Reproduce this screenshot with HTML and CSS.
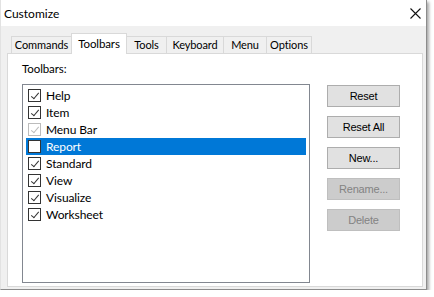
FILE: index.html
```html
<!DOCTYPE html>
<html>
<head>
<meta charset="utf-8">
<link rel="stylesheet" href="styles.css">
</head>
<body>
<div class="window">
  <div class="titlebar">
    <span class="title">Customize</span>
    <svg class="close" width="11" height="11" viewBox="0 0 11 11"><path d="M0.5 0.5 L10.5 10.5 M10.5 0.5 L0.5 10.5" stroke="#111" stroke-width="1.1" fill="none"/></svg>
  </div>
  <div class="body">
    <div class="tabs">
      <div class="tab first w-commands">Commands</div>
      <div class="tab active w-toolbars">Toolbars</div>
      <div class="tab w-tools">Tools</div>
      <div class="tab w-keyboard">Keyboard</div>
      <div class="tab w-menu">Menu</div>
      <div class="tab w-options">Options</div>
    </div>
    <div class="panel">
      <div class="left">
        <div class="label">Toolbars:</div>
        <div class="listbox">
          <div class="row"><span class="cb on"></span><span class="txt">Help</span></div>
          <div class="row"><span class="cb on"></span><span class="txt">Item</span></div>
          <div class="row"><span class="cb on dis"></span><span class="txt">Menu Bar</span></div>
          <div class="row sel"><span class="cb"></span><span class="txt">Report</span></div>
          <div class="row"><span class="cb on"></span><span class="txt">Standard</span></div>
          <div class="row"><span class="cb on"></span><span class="txt">View</span></div>
          <div class="row"><span class="cb on"></span><span class="txt">Visualize</span></div>
          <div class="row"><span class="cb on"></span><span class="txt">Worksheet</span></div>
        </div>
      </div>
      <div class="buttons">
        <div class="btn">Reset</div>
        <div class="btn">Reset All</div>
        <div class="btn">New...</div>
        <div class="btn disabled">Rename...</div>
        <div class="btn disabled">Delete</div>
      </div>
    </div>
  </div>
</div>
</body>
</html>
```

FILE: styles.css
```css
html, body { margin: 0; padding: 0; background: #fff; }
body { font-family: "Lato", "Liberation Sans", sans-serif; font-size: 11.5px; letter-spacing: -0.1px; color: #000; }

.window {
  width: 427px;
  height: 290px;
  box-sizing: border-box;
  border-left: 1px solid #e2e2e2;
  border-right: 1px solid #8c8c8c;
  border-bottom: 1px solid #8c8c8c;
  box-shadow: 2px 2px 3px rgba(0,0,0,0.35);
  display: flex;
  flex-direction: column;
  background: #f0f0f0;
}

.titlebar {
  height: 26px;
  background: #fff;
  display: flex;
  align-items: center;
  justify-content: space-between;
  padding: 0 5px 0 3px;
  flex: none;
}
.title { font-size: 12px; letter-spacing: 0; }
.close { display: block; }

.body {
  flex: 1;
  display: flex;
  flex-direction: column;
  padding: 7px 3px 3px 6px;
}

.tabs {
  display: flex;
  align-items: flex-end;
  padding-left: 4px;
  height: 20px;
  position: relative;
  z-index: 1;
}
.tab {
  height: 17px;
  box-sizing: border-box;
  border: 1px solid #d9d9d9;
  border-left: none;
  border-bottom: none;
  background: #f0f0f0;
  font-size: 11px;
  line-height: 16px;
  text-align: center;
  letter-spacing: -0.1px;
}
.tab.first { border-left: 1px solid #d9d9d9; }
.tab.active {
  height: 21px;
  background: #fff;
  border-left: 1px solid #d9d9d9;
  margin-left: -1px;
  padding-top: 1px;
  line-height: 17px;
  margin-bottom: -1px;
  font-size: 11.5px;
}
.w-commands { width: 61px; }
.w-toolbars { width: 56px; }
.w-tools { width: 40px; }
.w-keyboard { width: 57px; }
.w-menu { width: 43px; }
.w-options { width: 45px; }

.panel {
  flex: 1;
  background: #fff;
  border: 1px solid #d9d9d9;
  display: flex;
  padding: 8px 0 3px 14px;
}

.left { display: flex; flex-direction: column; }
.label { height: 22px; line-height: 14px; }

.listbox {
  width: 288px;
  height: 199px;
  box-sizing: border-box;
  border: 1px solid #828790;
  padding: 2px 3px 0 3px;
}
.row {
  height: 17px;
  display: flex;
  align-items: center;
  font-size: 12px;
}
.row.sel { background: #0078d7; color: #fff; }
.cb {
  width: 13px;
  height: 13px;
  box-sizing: border-box;
  border: 1px solid #333;
  background: #fff;
  margin-left: 2px;
  margin-right: 5px;
  position: relative;
}
.cb.on::after {
  content: "";
  position: absolute;
  width: 3px;
  height: 7px;
  border-right: 1.3px solid #333;
  border-bottom: 1.3px solid #333;
  transform: rotate(40deg);
  left: 3.5px;
  top: 0.5px;
}
.cb.dis { border-color: #bcbcbc; }
.cb.dis::after { border-color: #bcbcbc; }
.txt { line-height: 17px; }

.buttons {
  display: flex;
  flex-direction: column;
  gap: 9px;
  margin-left: 17px;
  padding-top: 23px;
}
.btn {
  width: 73px;
  height: 22px;
  box-sizing: border-box;
  background: #e1e1e1;
  border: 1px solid #adadad;
  font-family: "Liberation Sans", Arial, sans-serif;
  font-size: 11px;
  letter-spacing: -0.2px;
  text-align: center;
  line-height: 20px;
}
.btn.disabled { background: #cccccc; border-color: #bfbfbf; color: #838383; }
```
